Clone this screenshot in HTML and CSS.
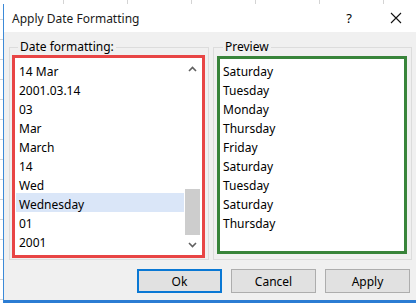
FILE: index.html
```html
<!DOCTYPE html>
<html lang="en">
<head>
  <meta charset="UTF-8">
  <title>Apply Date Formatting</title>
  <link rel="stylesheet" href="styles.css">
</head>
<body>
  <div class="window">
    <div class="titlebar">
      <span class="title">Apply Date Formatting</span>
      <span class="help">?</span>
      <svg class="close" width="12" height="12" viewBox="0 0 12 12">
        <path d="M1 1 L11 11 M11 1 L1 11" stroke="#111" stroke-width="1.1" fill="none"/>
      </svg>
    </div>

    <div class="content">
      <div class="groups">
        <fieldset class="group group-formats">
          <legend>Date formatting:</legend>
          <div class="box box-red">
            <ul class="list">
              <li>14 Mar</li>
              <li>2001.03.14</li>
              <li>03</li>
              <li>Mar</li>
              <li>March</li>
              <li>14</li>
              <li>Wed</li>
              <li class="selected">Wednesday</li>
              <li>01</li>
              <li>2001</li>
            </ul>
            <div class="scrollbar">
              <svg class="arrow" width="9" height="6" viewBox="0 0 9 6">
                <path d="M1 5 L4.5 1.5 L8 5" stroke="#606060" stroke-width="1.6" fill="none"/>
              </svg>
              <div class="track">
                <div class="thumb"></div>
              </div>
              <svg class="arrow" width="9" height="6" viewBox="0 0 9 6">
                <path d="M1 1 L4.5 4.5 L8 1" stroke="#606060" stroke-width="1.6" fill="none"/>
              </svg>
            </div>
          </div>
        </fieldset>

        <fieldset class="group group-preview">
          <legend>Preview</legend>
          <div class="box box-green">
            <ul class="list">
              <li>Saturday</li>
              <li>Tuesday</li>
              <li>Monday</li>
              <li>Thursday</li>
              <li>Friday</li>
              <li>Saturday</li>
              <li>Tuesday</li>
              <li>Saturday</li>
              <li>Thursday</li>
            </ul>
          </div>
        </fieldset>
      </div>

      <div class="buttons">
        <button class="btn btn-default">Ok</button>
        <button class="btn">Cancel</button>
        <button class="btn">Apply</button>
      </div>
    </div>
  </div>
</body>
</html>
```

FILE: styles.css
```css
body {
  margin: 0;
  width: 416px;
  height: 303px;
  overflow: hidden;
  font-family: "Noto Sans", "DejaVu Sans", sans-serif;
  font-size: 12px;
  color: #000;
  background-color: #fff;
  background-image:
    repeating-linear-gradient(90deg, transparent 0, transparent 63px, #d4d4d4 63px, #d4d4d4 64px),
    repeating-linear-gradient(180deg, transparent 0, transparent 19px, #d4d4d4 19px, #d4d4d4 20px);
}

.window {
  margin: 4px 0 0 3px;
  width: 412px;
  height: 296px;
  background: #f0f0f0;
  border-left: 1px solid #3c8ad8;
  border-bottom: 3px solid #2b7cd3;
  display: flex;
  flex-direction: column;
}

.titlebar {
  height: 28px;
  background: #fff;
  display: flex;
  align-items: center;
}

.title {
  margin-left: 8px;
  color: #1a1a1a;
}

.help {
  margin-left: auto;
  margin-right: 38px;
  font-size: 13px;
}

.close {
  margin-right: 14px;
}

.content {
  padding: 7px 5px 0 5px;
}

.groups {
  display: flex;
  gap: 4px;
}

.group {
  box-sizing: border-box;
  flex-shrink: 0;
  margin: 0;
  border: 1px solid #dcdcdc;
  padding: 0;
  min-width: 0;
}

.group legend {
  margin-left: 6px;
  padding: 0 2px;
  line-height: 16px;
}

.group-formats {
  width: 200px;
  padding: 0 3px 1px 2px;
}

.group-preview {
  width: 199px;
  padding: 1px 4px 4px 3px;
}

.box {
  background: #fff;
  display: flex;
}

.box-red {
  border: 3px solid #e84545;
  height: 195px;
  padding: 2px 1px 0 1px;
}

.box-green {
  border: 3px solid #38843a;
  height: 191px;
  padding: 1px 3px 0 0;
}

.list {
  list-style: none;
  margin: 0;
  padding: 0;
  flex-grow: 1;
}

.list li {
  height: 15px;
  line-height: 15px;
  padding: 4px 0 0 3px;
  white-space: nowrap;
}

.list li.selected {
  background: #dae6f8;
}

.scrollbar {
  width: 17px;
  margin-bottom: 1px;
  display: flex;
  flex-direction: column;
  align-items: center;
}

.arrow {
  margin: 6px 0;
}

.track {
  flex-grow: 1;
  width: 100%;
  display: flex;
  flex-direction: column;
  justify-content: flex-end;
  padding-bottom: 1px;
}

.thumb {
  height: 46px;
  margin: 0 1px;
  background: #cdcdcd;
}

.buttons {
  display: flex;
  justify-content: flex-end;
  gap: 9px;
  margin-top: 9px;
  margin-right: 1px;
}

.btn {
  width: 85px;
  height: 24px;
  font-family: inherit;
  font-size: 12px;
  color: #000;
  background: #e1e1e1;
  border: 1px solid #adadad;
  padding: 0;
}

.btn-default {
  border: 2px solid #0a78d4;
}
```
